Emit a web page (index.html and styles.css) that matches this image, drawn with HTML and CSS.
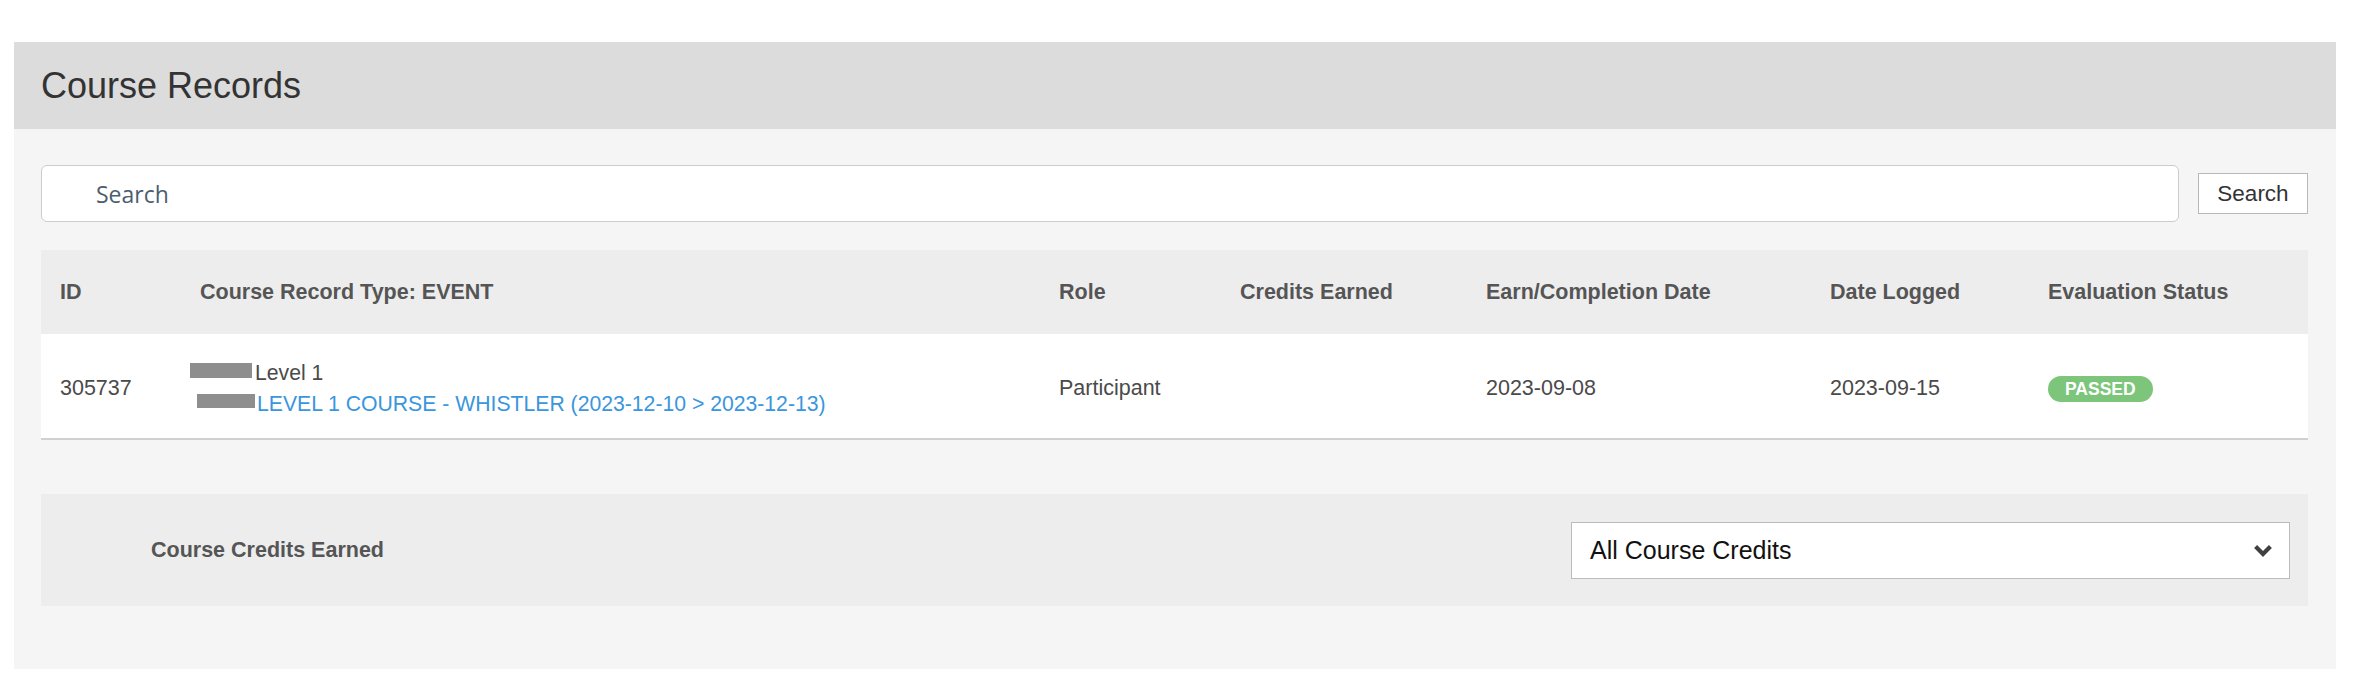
FILE: index.html
```html
<!DOCTYPE html>
<html lang="en">
<head>
<meta charset="utf-8">
<title>Course Records</title>
<link rel="stylesheet" href="styles.css">
</head>
<body>
<div class="panel">
  <div class="panel-header">
    <h1 class="panel-title">Course Records</h1>
  </div>
  <div class="panel-body">
    <div class="search-row">
      <input class="search-input" type="text" placeholder="Search">
      <button class="search-btn" type="button">Search</button>
    </div>
    <table class="records">
      <colgroup>
        <col class="c-id"><col class="c-course"><col class="c-role"><col class="c-credits"><col class="c-earn"><col class="c-logged"><col class="c-eval">
      </colgroup>
      <thead>
        <tr>
          <th>ID</th>
          <th>Course Record Type: EVENT</th>
          <th>Role</th>
          <th>Credits Earned</th>
          <th>Earn/Completion Date</th>
          <th>Date Logged</th>
          <th>Evaluation Status</th>
        </tr>
      </thead>
      <tbody>
        <tr>
          <td>305737</td>
          <td class="course-cell">
            <div class="course-line"><span class="redact redact-1"></span>Level 1</div>
            <div class="course-line"><span class="redact redact-2"></span><a class="course-link" href="#">LEVEL 1 COURSE - WHISTLER (2023-12-10 &gt; 2023-12-13)</a></div>
          </td>
          <td>Participant</td>
          <td></td>
          <td>2023-09-08</td>
          <td>2023-09-15</td>
          <td><span class="badge">PASSED</span></td>
        </tr>
      </tbody>
    </table>
    <div class="credits-box">
      <div class="credits-label">Course Credits Earned</div>
      <div class="select">
        <span class="select-text">All Course Credits</span>
        <svg class="chevron" width="20" height="13" viewBox="0 0 20 13"><path d="M2.6 2.6 L10 10 L17.4 2.6" fill="none" stroke="#404040" stroke-width="4.2" stroke-linecap="butt" stroke-linejoin="miter"/></svg>
      </div>
    </div>
  </div>
</div>
</body>
</html>
```

FILE: styles.css
```css
* { box-sizing: border-box; }

html, body {
  margin: 0;
  padding: 0;
  background: #ffffff;
}

body {
  padding: 42px 0 19px 14px;
  font-family: "Liberation Sans", Arial, Helvetica, sans-serif;
  color: #4a4a4a;
}

.panel {
  width: 2322px;
  background: #f5f5f5;
}

.panel-header {
  height: 87px;
  background: #dcdcdc;
  padding-left: 27px;
  display: flex;
  align-items: center;
}

.panel-title {
  margin: 0;
  font-size: 36px;
  font-weight: normal;
  color: #333333;
}

.panel-body {
  padding: 36px 28px 63px 27px;
}

.search-row {
  display: flex;
  align-items: center;
  gap: 19px;
}

.search-input {
  flex: 1;
  height: 57px;
  border: 1px solid #cccccc;
  border-radius: 6px;
  background: #ffffff;
  padding: 0 0 0 54px;
  font-family: "Open Sans", sans-serif;
  font-size: 23px;
  color: #4c5d70;
  outline: none;
}

.search-input::placeholder {
  color: #4c5d70;
  opacity: 1;
}

.search-btn {
  width: 110px;
  height: 41px;
  border: 1px solid #b8b8b8;
  border-radius: 0;
  background: #ffffff;
  font-family: "Liberation Sans", Arial, sans-serif;
  font-size: 22.5px;
  color: #333333;
  padding: 0;
}

.records {
  margin-top: 28px;
  width: 100%;
  border-collapse: collapse;
  table-layout: fixed;
}

.c-id { width: 140px; }
.c-course { width: 859px; }
.c-role { width: 181px; }
.c-credits { width: 246px; }
.c-earn { width: 344px; }
.c-logged { width: 218px; }
.c-eval { width: 279px; }

.records th {
  height: 84px;
  background: #ededed;
  text-align: left;
  padding: 0 0 0 19px;
  font-size: 21.5px;
  font-weight: bold;
  color: #555555;
  vertical-align: middle;
}

.records td {
  height: 105px;
  background: #ffffff;
  padding: 5px 0 0 19px;
  font-size: 21.5px;
  color: #4a4a4a;
  vertical-align: middle;
  border-bottom: 2px solid #d0d0d0;
}

.records td.course-cell {
  padding-top: 3px;
  font-size: 21.2px;
}

.course-line {
  line-height: 31px;
  white-space: nowrap;
}

.redact {
  display: inline-block;
  background: #8e8e8e;
}

.redact-1 {
  width: 62px;
  height: 15px;
  margin-left: -10px;
  margin-right: 3px;
  vertical-align: 2px;
}

.redact-2 {
  width: 58px;
  height: 14px;
  margin-left: -3px;
  margin-right: 2px;
  vertical-align: 3px;
}

.course-link {
  color: #3a96dd;
  text-decoration: none;
}

.badge {
  display: inline-block;
  height: 26px;
  line-height: 26px;
  padding: 0 17px;
  border-radius: 13px;
  background: #7dc57a;
  color: #ffffff;
  font-size: 17.5px;
  font-weight: bold;
  vertical-align: middle;
}

.credits-box {
  margin-top: 54px;
  height: 112px;
  background: #ededed;
  display: flex;
  align-items: center;
  justify-content: space-between;
  padding: 0 18px 0 110px;
}

.credits-label {
  font-size: 21.5px;
  font-weight: bold;
  color: #555555;
}

.select {
  width: 719px;
  height: 57px;
  background: #ffffff;
  border: 1px solid #bbbbbb;
  display: flex;
  align-items: center;
  justify-content: space-between;
  padding: 0 16px 0 18px;
}

.select-text {
  font-size: 25px;
  color: #111111;
}

.chevron {
  display: block;
}
```
